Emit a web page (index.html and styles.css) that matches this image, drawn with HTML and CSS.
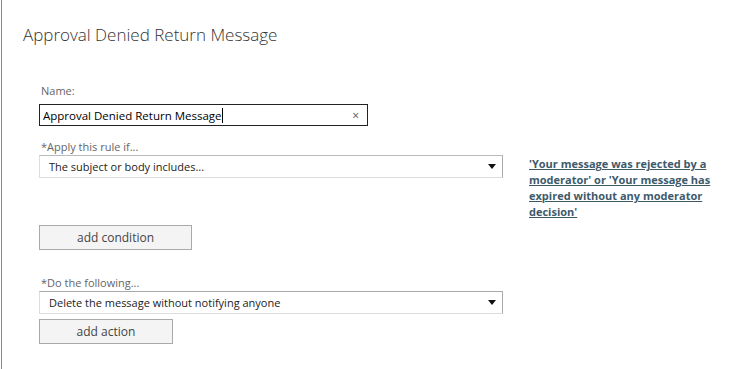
FILE: index.html
```html
<!doctype html>
<html lang="en">
<head>
    <meta charset="utf-8">
    <title>Approval Denied Return Message</title>
    <link rel="stylesheet" href="styles.css">
</head>
<body>
  <div class="page">
    <h1 class="title">Approval Denied Return Message</h1>

    <div class="form">
      <label class="label">Name:</label>
      <div class="textbox">
        <span class="textbox-value">Approval Denied Return Message</span><span class="caret"></span>
        <span class="clear">&#215;</span>
      </div>

      <label class="label label-gap">*Apply this rule if...</label>
      <div class="rule-row">
        <div class="dropdown">
          <span>The subject or body includes...</span>
          <span class="arrow"></span>
        </div>
        <a class="rule-link" href="#">'Your message was rejected by a moderator' or 'Your message has expired without any moderator decision'</a>
      </div>
      <button type="button" class="custom-button btn-condition">add condition</button>

      <label class="label label-gap2">*Do the following...</label>
      <div class="dropdown dropdown-single">
        <span>Delete the message without notifying anyone</span>
        <span class="arrow"></span>
      </div>
      <button type="button" class="custom-button btn-action">add action</button>
    </div>
  </div>
</body>
</html>
```

FILE: styles.css
```css
html, body {
  margin: 0;
  padding: 0;
  background: #fff;
}

body {
  font-family: "Open Sans", "Noto Sans", sans-serif;
  color: #333;
}

.page {
  border-left: 1px solid #888;
  margin-left: 1px;
  height: 369px;
  box-sizing: border-box;
  padding: 23px 0 0 21px;
  overflow: hidden;
}

.title {
  margin: 0;
  font-size: 17px;
  font-weight: 300;
  color: #333;
  line-height: 24px;
}

.form {
  padding: 36px 0 0 16px;
}

.label {
  display: block;
  font-size: 11px;
  color: #666;
  line-height: 15px;
  margin-left: 2px;
}

.label-gap {
  margin-top: 13px;
}

.label-gap2 {
  margin-top: 25px;
}

.textbox {
  margin-top: 6px;
  width: 329px;
  height: 22px;
  box-sizing: border-box;
  border: 1px solid #222;
  display: flex;
  align-items: center;
  padding-left: 3px;
  font-size: 11.5px;
  color: #000;
  position: relative;
}

.caret {
  display: inline-block;
  width: 1px;
  height: 15px;
  background: #000;
}

.clear {
  position: absolute;
  right: 8px;
  top: 2px;
  font-size: 12px;
  color: #555;
}

.rule-row {
  display: flex;
  align-items: flex-start;
  margin-top: 1px;
}

.dropdown {
  width: 464px;
  height: 23px;
  box-sizing: border-box;
  border: 1px solid #ddd;
  border-right-color: #aaa;
  border-top-color: #bbb;
  display: flex;
  align-items: center;
  justify-content: space-between;
  padding: 0 6px 0 9px;
  font-size: 11px;
  color: #222;
}

.dropdown-single {
  margin-top: 1px;
  border-top-color: #aaa;
}

.arrow {
  width: 0;
  height: 0;
  border-left: 4px solid transparent;
  border-right: 4px solid transparent;
  border-top: 5px solid #111;
}

.rule-link {
  margin-left: 26px;
  margin-top: 1px;
  width: 186px;
  font-size: 11px;
  font-weight: 700;
  line-height: 16px;
  color: #3d5a6c;
}

.custom-button {
  display: block;
  background-color: #f4f4f4;
  border: 1px solid #aaa;
  color: #444;
  font-family: inherit;
  font-size: 12px;
  height: 25px;
  padding: 0;
  cursor: pointer;
}

.btn-condition {
  margin-top: 5px;
  width: 153px;
}

.btn-action {
  margin-top: 5px;
  width: 134px;
}
```
